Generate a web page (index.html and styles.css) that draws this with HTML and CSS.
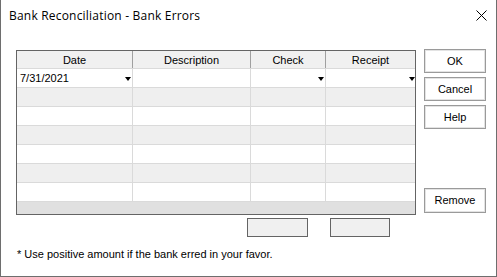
FILE: index.html
```html
<!DOCTYPE html>
<html>
<head>
<meta charset="utf-8">
<link rel="stylesheet" href="styles.css">
</head>
<body>
<div class="window">
  <div class="titlebar">
    <span class="title">Bank Reconciliation - Bank Errors</span>
    <svg class="close" width="11" height="11" viewBox="0 0 11 11"><path d="M0.5 0.5 L10.5 10.5 M10.5 0.5 L0.5 10.5" stroke="#000" stroke-width="1" fill="none"/></svg>
  </div>
  <div class="content">
    <div class="top">
      <div class="left">
        <div class="grid">
          <div class="row head">
            <div class="c c1">Date</div>
            <div class="c c2">Description</div>
            <div class="c c3">Check</div>
            <div class="c c4">Receipt</div>
          </div>
          <div class="row">
            <div class="c c1 drop"><span class="val">7/31/2021</span><span class="tri"></span></div>
            <div class="c c2"></div>
            <div class="c c3 drop"><span class="val"></span><span class="tri"></span></div>
            <div class="c c4 drop"><span class="val"></span><span class="tri"></span></div>
          </div>
          <div class="row alt"><div class="c c1"></div><div class="c c2"></div><div class="c c3"></div><div class="c c4"></div></div>
          <div class="row"><div class="c c1"></div><div class="c c2"></div><div class="c c3"></div><div class="c c4"></div></div>
          <div class="row alt"><div class="c c1"></div><div class="c c2"></div><div class="c c3"></div><div class="c c4"></div></div>
          <div class="row"><div class="c c1"></div><div class="c c2"></div><div class="c c3"></div><div class="c c4"></div></div>
          <div class="row alt"><div class="c c1"></div><div class="c c2"></div><div class="c c3"></div><div class="c c4"></div></div>
          <div class="row last"><div class="c c1"></div><div class="c c2"></div><div class="c c3"></div><div class="c c4"></div></div>
          <div class="filler"></div>
        </div>
        <div class="totals">
          <div class="tot"></div>
          <div class="tot"></div>
        </div>
      </div>
      <div class="buttons">
        <div class="btn">OK</div>
        <div class="btn">Cancel</div>
        <div class="btn">Help</div>
        <div class="spacer"></div>
        <div class="btn remove">Remove</div>
      </div>
    </div>
    <div class="note">* Use positive amount if the bank erred in your favor.</div>
  </div>
</div>
</body>
</html>
```
FILE: styles.css
```css
* { box-sizing: border-box; }
html, body { margin: 0; padding: 0; background: #fff; }
body { font-family: "Liberation Sans", Arial, sans-serif; font-size: 11px; color: #000; }

.window {
  width: 497px;
  height: 277px;
  border: 1px solid #6e6e6e;
  border-top: none;
  background: #fff;
  position: relative;
}

.titlebar {
  height: 30px;
  display: flex;
  align-items: center;
  justify-content: space-between;
  padding-left: 8px;
  padding-right: 9px;
}
.title {
  font-family: "Open Sans", "Noto Sans", sans-serif;
  font-size: 12px;
  color: #000;
  letter-spacing: 0.2px;
  margin-top: 1px;
}
.close { display: block; margin-top: 1px; }

.content {
  padding-left: 15px;
  padding-top: 19px;
}

.top {
  display: flex;
  align-items: flex-start;
}

.left { width: 400px; }

.grid {
  margin-top: 1px;
  width: 400px;
  border: 1px solid #646464;
  display: flex;
  flex-direction: column;
}

.row {
  display: flex;
  height: 19px;
  border-bottom: 1px solid #dadada;
  background: #fff;
}
.row.alt { background: #efefef; }
.row.head {
  height: 18px;
  background: #f0f0f0;
  border-bottom: 1px solid #dadada;
}
.c {
  height: 100%;
  border-right: 1px solid #dadada;
  display: flex;
  align-items: center;
  line-height: 13px;
}
.head .c { justify-content: center; border-right-color: #a0a0a0; padding-top: 1px; }
.c1 { width: 116px; }
.c2 { width: 118px; }
.c3 { width: 75px; }
.c4 { width: 89px; border-right: none; }

.drop { justify-content: space-between; padding-left: 3px; padding-right: 1px; }
.c4.drop { padding-right: 0; }
.tri {
  width: 0; height: 0;
  border-left: 3.5px solid transparent;
  border-right: 3.5px solid transparent;
  border-top: 4px solid #000;
  margin-top: 1px;
}

.filler {
  height: 12px;
  background: #e0e0e0;
}

.totals {
  display: flex;
  margin-top: 3px;
  padding-left: 231px;
  gap: 22px;
}
.tot {
  width: 61px;
  height: 19px;
  background: #f0f0f0;
  border: 1px solid #646464;
}
.tot + .tot { width: 60px; }

.buttons {
  margin-left: 8px;
  width: 62px;
  height: 164px;
  display: flex;
  flex-direction: column;
  gap: 4px;
}
.btn {
  height: 24px;
  border: 1px solid #9a9a9a;
  box-shadow: inset 0 0 0 1px #e3e3e3;
  background: #fff;
  display: flex;
  align-items: center;
  justify-content: center;
  line-height: 13px;
  color: #000;
}
.btn.remove { height: 25px; }
.spacer { flex: 1; }

.note {
  margin-top: 11px;
  line-height: 13px;
  padding-left: 1px;
}
```
